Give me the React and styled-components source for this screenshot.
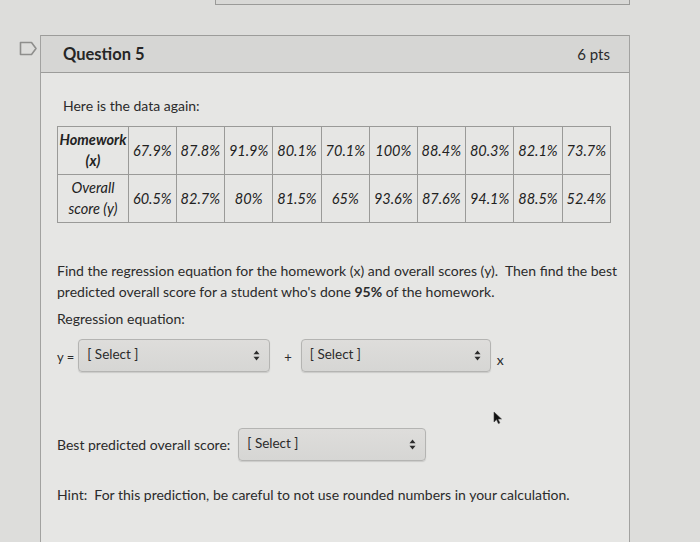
import React from "react";
import styled, { createGlobalStyle } from "styled-components";

const GlobalStyle = createGlobalStyle`
  html, body {
    margin: 0;
    padding: 0;
    background: #dddddb;
    width: 700px;
    height: 542px;
    overflow: hidden;
  }
  body {
    font-family: Lato, "Open Sans", Arial, sans-serif;
    color: #2b2b2b;
  }
`;

const homework = ["67.9%", "87.8%", "91.9%", "80.1%", "70.1%", "100%", "88.4%", "80.3%", "82.1%", "73.7%"];
const overall = ["60.5%", "82.7%", "80%", "81.5%", "65%", "93.6%", "87.6%", "94.1%", "88.5%", "52.4%"];

const SelectArrows = () => (
  <svg width="7" height="11" viewBox="0 0 7 11">
    <path d="M3.5 0.5 L6.5 4.3 H0.5 Z" fill="#2b2b2b" />
    <path d="M3.5 10.5 L6.5 6.7 H0.5 Z" fill="#2b2b2b" />
  </svg>
);

const Select = ({ width }) => (
  <SelectBox $width={width}>
    <span>[ Select ]</span>
    <SelectArrows />
  </SelectBox>
);

const App = () => {
  return (
    <Page>
      <GlobalStyle />
      <PrevCardEdge />
      <QuestionRow>
        <FlagCol>
          <svg width="19" height="15" viewBox="0 0 19 15">
            <path
              d="M1.5 1.5 H12.5 L17 7.5 L12.5 13.5 H1.5 Z"
              fill="none"
              stroke="#8e8e8c"
              strokeWidth="1.6"
              strokeLinejoin="round"
            />
          </svg>
        </FlagCol>
        <Card>
          <Header>
            <Title>Question 5</Title>
            <Points>6 pts</Points>
          </Header>
          <Body>
            <Intro>Here is the data again:</Intro>
            <DataTable>
              <tbody>
                <tr>
                  <RowHead $bold>Homework<br />(x)</RowHead>
                  {homework.map((v, i) => (
                    <Cell key={i}>{v}</Cell>
                  ))}
                </tr>
                <tr>
                  <RowHead>Overall<br />score (y)</RowHead>
                  {overall.map((v, i) => (
                    <Cell key={i}>{v}</Cell>
                  ))}
                </tr>
              </tbody>
            </DataTable>
            <Paragraph>
              Find the regression equation for the homework (x) and overall scores (y).&nbsp; Then find the best
              <br />
              predicted overall score for a student who's done <strong>95%</strong> of the homework.
            </Paragraph>
            <Label>Regression equation:</Label>
            <EquationRow>
              <Small>y =</Small>
              <Select width={192} />
              <Small $pad>+</Small>
              <Select width={190} />
              <XVar>x</XVar>
            </EquationRow>
            <PredictRow>
              <span>Best predicted overall score:</span>
              <Select width={188} />
            </PredictRow>
            <Hint>Hint:&nbsp; For this prediction, be careful to not use rounded numbers in your calculation.</Hint>
          </Body>
        </Card>
      </QuestionRow>
      <Cursor>
        <svg width="10" height="14" viewBox="0 0 10 14">
          <path d="M1 1 L1 11 L3.5 8.6 L5.4 12.6 L6.9 11.9 L5 8 L8.5 8 Z" fill="#111" stroke="#444" strokeWidth="0.6" />
        </svg>
      </Cursor>
    </Page>
  );
};

const Page = styled.div`
  position: relative;
  width: 700px;
  height: 542px;
  overflow: hidden;
`;

const PrevCardEdge = styled.div`
  margin-left: 215px;
  width: 413px;
  height: 4px;
  background: #d8d8d6;
  border: 1px solid #9a9a98;
  border-top: none;
`;

const QuestionRow = styled.div`
  display: flex;
  margin-top: 30px;
`;

const FlagCol = styled.div`
  flex: 0 0 40px;
  padding: 5px 0 0 19px;
  box-sizing: border-box;
`;

const Card = styled.div`
  flex: 0 0 590px;
  min-height: 520px;
  background: #e6e6e4;
  border-left: 1px solid #a2a2a0;
  border-right: 1px solid #a2a2a0;
  box-sizing: border-box;
`;

const Header = styled.div`
  height: 38px;
  box-sizing: border-box;
  display: flex;
  align-items: center;
  justify-content: space-between;
  padding: 0 19px 0 22px;
  background: #d6d6d4;
  border-top: 1px solid #9c9c9a;
  border-bottom: 1px solid #9c9c9a;
`;

const Title = styled.h2`
  margin: 0;
  font-size: 16.5px;
  font-weight: 700;
  color: #262626;
`;

const Points = styled.span`
  font-size: 15px;
  color: #2b2b2b;
`;

const Body = styled.div`
  padding: 22px 0 0 16px;
  font-size: 14px;
  line-height: 21px;
`;

const Intro = styled.p`
  margin: 0 0 10px 6px;
`;

const DataTable = styled.table`
  border-collapse: collapse;
  width: 554px;
  border: 1px solid #8a8a88;
  font-size: 14.5px;
  line-height: 21px;
  font-style: italic;
  color: #222;
`;

const RowHead = styled.td`
  width: 70px;
  padding: 2px 0 3px;
  text-align: center;
  font-weight: ${(p) => (p.$bold ? 700 : 400)};
  border: 1px solid #9a9a98;
`;

const Cell = styled.td`
  padding: 2px 2px;
  text-align: center;
  white-space: nowrap;
  border: 1px solid #9a9a98;
`;

const Paragraph = styled.p`
  margin: 37px 0 0;
  font-size: 14px;
  white-space: nowrap;
  strong {
    font-weight: 700;
  }
`;

const Label = styled.p`
  margin: 6px 0 0;
`;

const EquationRow = styled.div`
  display: flex;
  align-items: center;
  margin-top: 10px;
  font-size: 13px;
`;

const Small = styled.span`
  padding: ${(p) => (p.$pad ? "4px 9px 0 14px" : "4px 4px 0 0")};
`;

const XVar = styled.span`
  align-self: flex-end;
  margin: 0 0 2px 6px;
  font-size: 14px;
`;

const SelectBox = styled.div`
  width: ${(p) => p.$width}px;
  height: 33px;
  box-sizing: border-box;
  display: flex;
  align-items: center;
  justify-content: space-between;
  padding: 0 9px 3px 8px;
  background: linear-gradient(#dedddb, #d6d6d4);
  border: 1px solid #b4b4b2;
  border-radius: 4px;
  box-shadow: 0 1px 1px rgba(0, 0, 0, 0.12);
  font-size: 13.5px;
  color: #2b2b2b;
  svg {
    margin-top: 3px;
  }
`;

const PredictRow = styled.div`
  display: flex;
  align-items: center;
  gap: 8px;
  margin-top: 56px;
`;

const Hint = styled.p`
  margin: 23px 0 0;
`;

const Cursor = styled.div`
  position: absolute;
  left: 493px;
  top: 409px;
`;

export default App;
